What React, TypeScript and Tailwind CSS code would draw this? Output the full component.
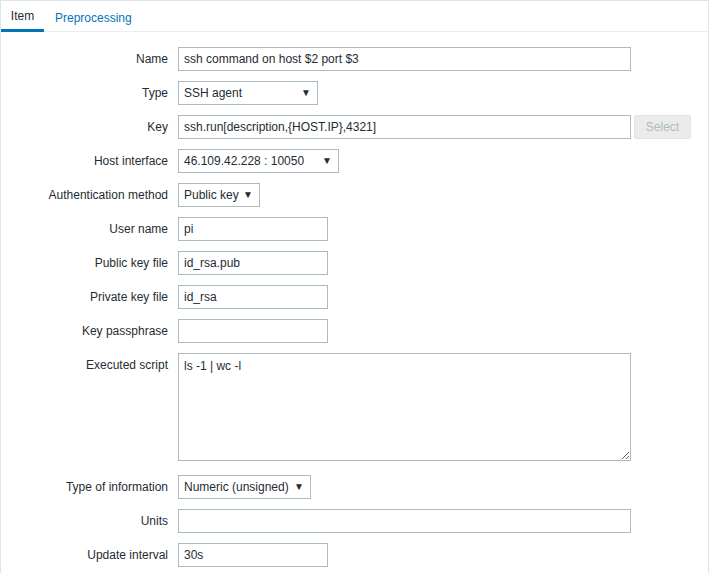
import React from "react";

const font = { fontFamily: '"Liberation Sans", Arial, sans-serif' };

function Row({ label, children, top = false, extra = "" }: { label: string; children: React.ReactNode; top?: boolean; extra?: string }) {
  return (
    <div className={`flex ${top ? "items-start" : "items-center"} ${extra}`}>
      <div className="w-[167px] h-[24px] flex items-center justify-end text-[12px] text-[#1f2c33] shrink-0">{label}</div>
      <div className="ml-[10px] flex items-center">{children}</div>
    </div>
  );
}

function Input({ w, value = "" }: { w: string; value?: string }) {
  return (
    <div className={`${w} h-[24px] border border-[#acbbc2] bg-white px-[5px] flex items-center text-[12px] text-[#1f2c33] whitespace-nowrap overflow-hidden`}>
      {value}
    </div>
  );
}

function Select({ w, value }: { w: string; value: string }) {
  return (
    <div className={`${w} h-[24px] border border-[#acbbc2] bg-white pl-[5px] pr-[6px] flex items-center justify-between text-[12px] text-[#1f2c33] whitespace-nowrap`}>
      <span>{value}</span>
      <span className="text-[10px] leading-none">▼</span>
    </div>
  );
}

export default function App() {
  return (
    <div style={font} className="w-[709px] h-[573px] bg-white border-l border-t border-r border-[#dfe4e7] overflow-hidden">
      <div className="flex h-[31px] border-b border-[#ebeef0]">
        <div className="h-[31px] px-[11px] flex items-center text-[12px] text-[#1f2c33] border-b-[3px] border-[#0275b8] pt-[2px] w-[43px] justify-center">Item</div>
        <div className="h-[31px] px-[11px] flex items-start pt-[8px] text-[12px] text-[#0275b8]">Preprocessing</div>
      </div>
      <div className="pt-[15px] flex flex-col gap-[10px]">
        <Row label="Name"><Input w="w-[453px]" value="ssh command on host $2 port $3" /></Row>
        <Row label="Type"><Select w="w-[140px]" value="SSH agent" /></Row>
        <Row label="Key">
          <Input w="w-[453px]" value="ssh.run[description,{HOST.IP},4321]" />
          <div className="ml-[3px] w-[57px] h-[24px] border border-[#dfe4e7] bg-[#ebebeb] rounded-[2px] flex items-center justify-center text-[12px] text-[#acbbc2]">Select</div>
        </Row>
        <Row label="Host interface"><Select w="w-[161px]" value="46.109.42.228 : 10050" /></Row>
        <Row label="Authentication method"><Select w="w-[82px]" value="Public key" /></Row>
        <Row label="User name"><Input w="w-[150px]" value="pi" /></Row>
        <Row label="Public key file"><Input w="w-[150px]" value="id_rsa.pub" /></Row>
        <Row label="Private key file"><Input w="w-[150px]" value="id_rsa" /></Row>
        <Row label="Key passphrase"><Input w="w-[150px]" /></Row>
        <Row label="Executed script" top extra="mb-[4px]">
          <textarea
            readOnly
            defaultValue="ls -1 | wc -l"
            style={font}
            className="block w-[453px] h-[108px] border border-[#acbbc2] bg-white px-[5px] py-[3px] text-[12px] text-[#1f2c33] outline-none"
          />
        </Row>
        <Row label="Type of information"><Select w="w-[133px]" value="Numeric (unsigned)" /></Row>
        <Row label="Units"><Input w="w-[453px]" /></Row>
        <Row label="Update interval"><Input w="w-[150px]" value="30s" /></Row>
      </div>
    </div>
  );
}
